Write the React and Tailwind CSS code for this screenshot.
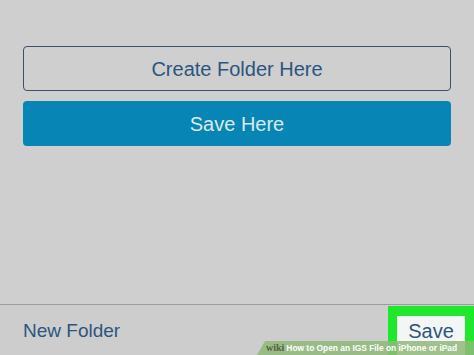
export default function App() {
  const font = { fontFamily: '"Liberation Sans", Arial, sans-serif' };
  return (
    <div className="relative w-[474px] h-[355px] overflow-hidden bg-[#cfcfcf] flex flex-col" style={font}>
      <div className="flex flex-col gap-[10px] px-[23px] pt-[46px]">
        <div className="h-[45px] rounded-[4px] border border-[#3a506c] flex items-center justify-center text-[20px] text-[#2b5580]">
          Create Folder Here
        </div>
        <div className="h-[45px] rounded-[4px] bg-[#0786b5] flex items-center justify-center text-[20px] text-[#dbe9f0]">
          Save Here
        </div>
      </div>
      <div className="flex-1" />
      <div className="h-[51px] border-t border-[#9c9c9c] bg-[#cdcdcd] flex items-start justify-between">
        <div className="pl-[23px] pt-[12px] text-[19px] text-[#2b5580]">New Folder</div>
        <div className="w-[86px] h-[50px] mt-[1px] bg-[#1ee82c] pl-[9px] pt-[10px]">
          <div className="w-[68px] h-[40px] bg-[#f3f5f6] flex justify-center pt-[0px] text-[20px] text-[#2b5580]">Save</div>
        </div>
      </div>
      <div className="absolute right-0 bottom-0 h-[14px] w-[217px] bg-[#8fb87a]/85 [clip-path:polygon(8px_0,100%_0,100%_100%,0_100%)] flex items-center pl-[9px] leading-none whitespace-nowrap">
        <span className="text-[10px] text-[#55603f] font-bold mr-[2px]" style={{ fontFamily: '"Liberation Serif", serif' }}>wiki</span>
        <span className="text-[8.4px] font-bold text-white">How to Open an IGS File on iPhone or iPad</span>
      </div>
    </div>
  );
}
